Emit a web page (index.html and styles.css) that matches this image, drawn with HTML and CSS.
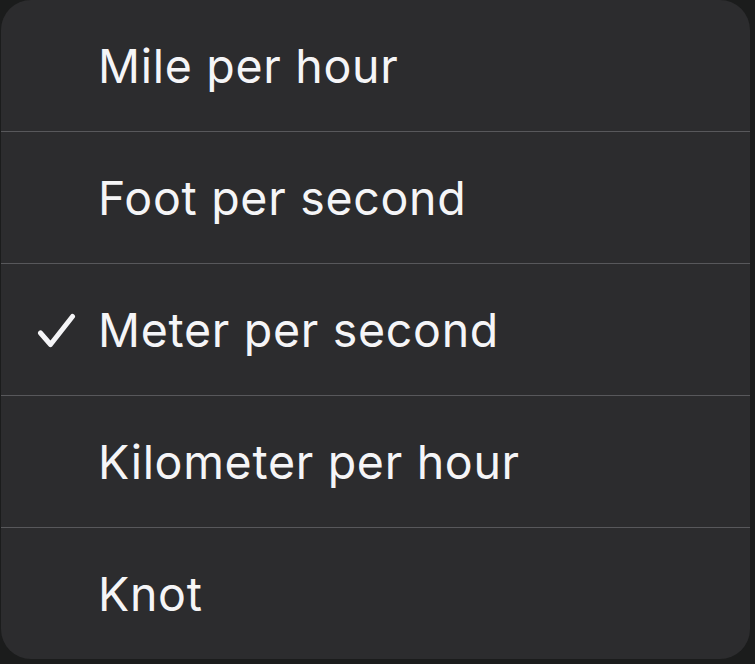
FILE: index.html
```html
<!DOCTYPE html>
<html>
<head>
<meta charset="utf-8">
<link rel="stylesheet" href="styles.css">
</head>
<body>
<div class="menu">
  <div class="row"><span class="check"></span><span class="label">Mile per hour</span></div>
  <div class="row"><span class="check"></span><span class="label">Foot per second</span></div>
  <div class="row"><span class="check"><svg width="40" height="36" viewBox="0 0 40 36"><path d="M3.5 20 L13.5 31.5 L35.5 3.5" fill="none" stroke="#f5f5f7" stroke-width="5" stroke-linecap="round" stroke-linejoin="round"/></svg></span><span class="label">Meter per second</span></div>
  <div class="row"><span class="check"></span><span class="label">Kilometer per hour</span></div>
  <div class="row last"><span class="check"></span><span class="label">Knot</span></div>
</div>
</body>
</html>
```
FILE: styles.css
```css
html, body {
  margin: 0;
  padding: 0;
  background: #1b1c1c;
  width: 755px;
  height: 664px;
  overflow: hidden;
}
.menu {
  margin-left: 1px;
  width: 749px;
  height: 659px;
  background: #2c2c2e;
  border-radius: 30px;
  display: flex;
  flex-direction: column;
  overflow: hidden;
}
.row {
  height: 131px;
  border-bottom: 1px solid #58585b;
  display: flex;
  align-items: center;
  font-family: Inter, "Noto Sans", sans-serif;
  font-size: 46.5px;
  color: #f5f5f7;
  letter-spacing: 0.7px;
}
.row.last {
  border-bottom: none;
  flex: 1;
}
.check {
  width: 97px;
  padding-left: 36px;
  box-sizing: border-box;
  display: flex;
  align-items: center;
}
.check svg { display: block; margin-top: 2px; }
.label { line-height: 1; margin-top: 1px; }
```
